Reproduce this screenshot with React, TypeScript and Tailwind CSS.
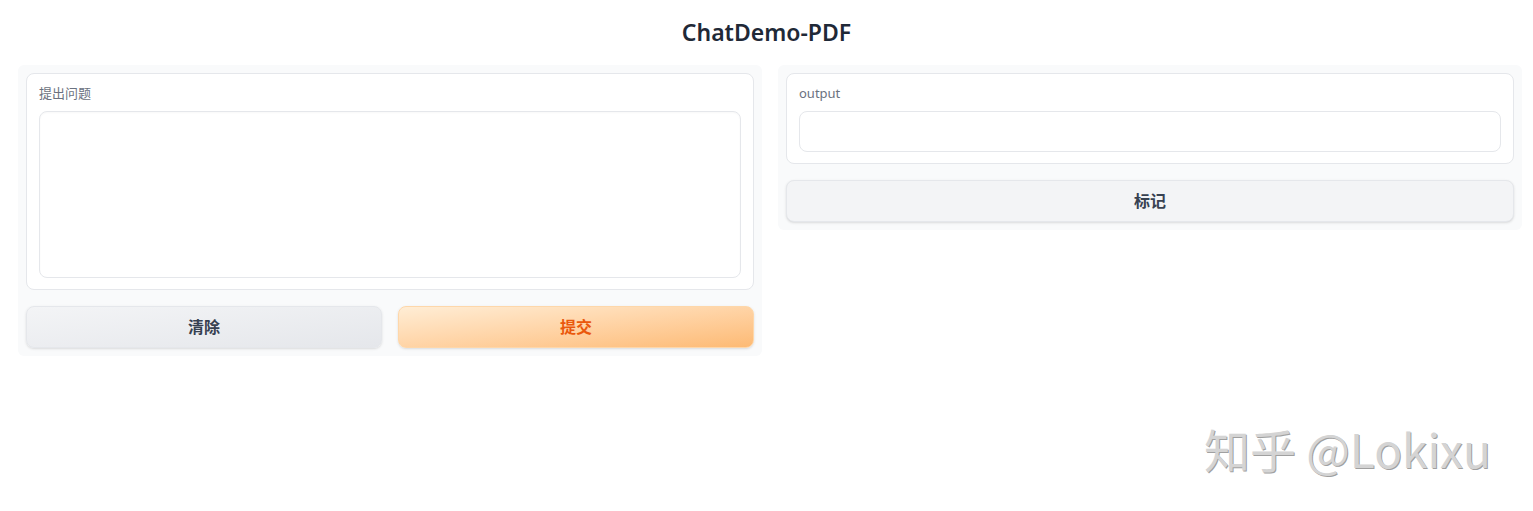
import React from "react";

export default function App() {
  const font = { fontFamily: '"Noto Sans", "Noto Sans CJK SC", sans-serif' };
  return (
    <div className="relative w-[1533px] h-[511px] bg-white overflow-hidden" style={font}>
      <div className="pt-[17px] flex justify-center">
        <h1 className="text-[23px] leading-[30px] font-semibold text-[#1f2937]">ChatDemo-PDF</h1>
      </div>
      <div className="mt-[18px] pl-[18px] flex gap-[16px] items-start">
        <div className="w-[744px] bg-[#f9fafb] rounded-md p-[8px] flex flex-col gap-[16px]">
          <div className="bg-white border border-[#e5e7eb] rounded-lg px-[12px] pt-[10px] pb-[11px] flex flex-col gap-[8px]">
            <div className="text-[13px] leading-[19px] text-[#6b7280]">提出问题</div>
            <div className="h-[167px] border border-[#e5e7eb] rounded-lg shadow-[inset_0_1px_2px_rgba(0,0,0,0.03)]" />
          </div>
          <div className="flex gap-[16px]">
            <button className="flex-1 h-[42px] rounded-lg border border-[#e5e7eb] bg-gradient-to-br from-[#f3f4f6] to-[#e5e7eb] text-[16px] font-bold text-[#374151] shadow-sm">清除</button>
            <button className="flex-1 h-[42px] rounded-lg border border-[#fed7aa] bg-gradient-to-br from-[#ffedd5] to-[#fdba74] text-[16px] font-bold text-[#ea580c] shadow-sm">提交</button>
          </div>
        </div>
        <div className="w-[744px] bg-[#f9fafb] rounded-md p-[8px] flex flex-col gap-[16px]">
          <div className="bg-white border border-[#e5e7eb] rounded-lg px-[12px] pt-[10px] pb-[11px] flex flex-col gap-[8px]">
            <div className="text-[13px] leading-[19px] text-[#6b7280]">output</div>
            <div className="h-[41px] border border-[#e5e7eb] rounded-lg" />
          </div>
          <button className="h-[42px] rounded-lg border border-[#e5e7eb] bg-[#f3f4f6] text-[16px] font-bold text-[#374151] shadow-sm">标记</button>
        </div>
      </div>
      <div
        className="absolute left-[1204px] top-[418px] text-[46px] leading-[60px] text-[#d4d4d4] whitespace-nowrap [text-shadow:1px_1px_0_#a0a0a0]"
        style={{ fontFamily: '"Noto Sans CJK SC", "Noto Sans", sans-serif' }}
      >
        知乎 @Lokixu
      </div>
    </div>
  );
}
